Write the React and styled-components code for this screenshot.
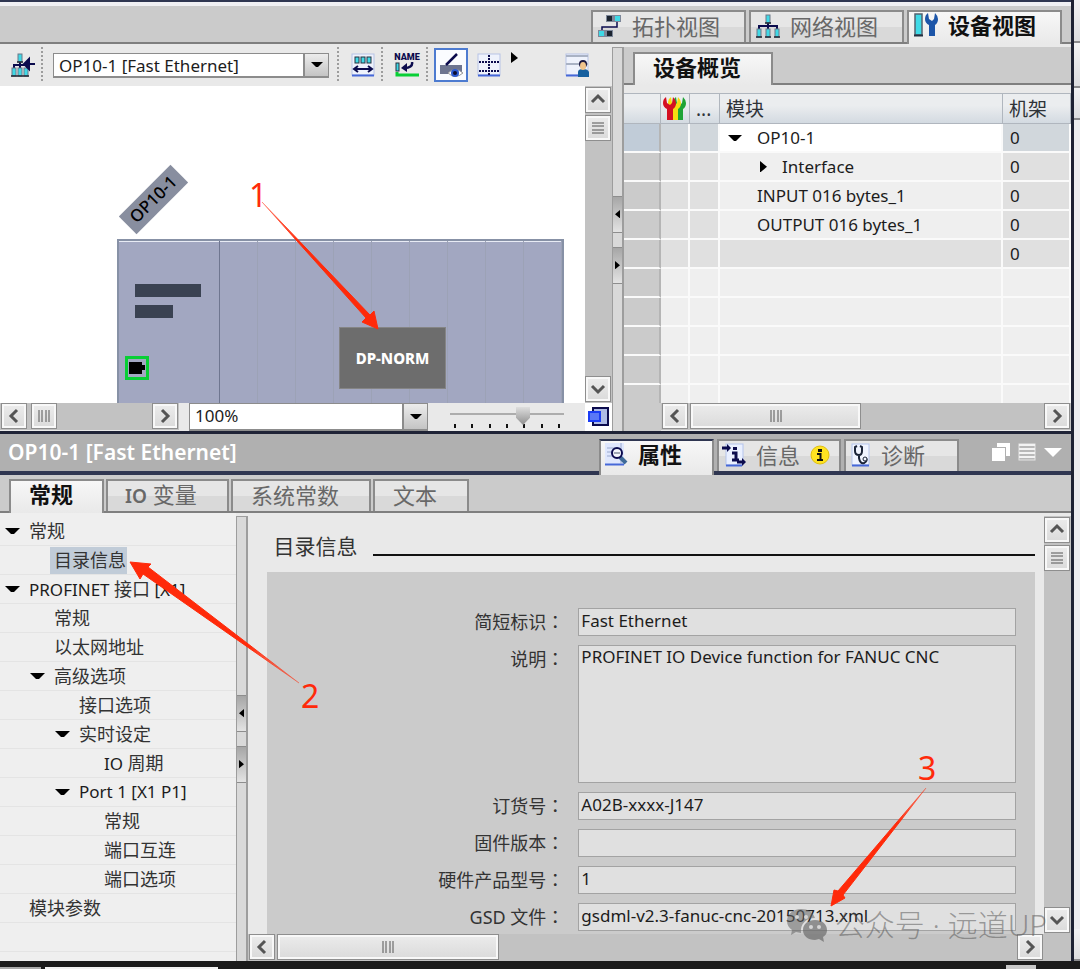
import React from "react";
import styled, { createGlobalStyle, css } from "styled-components";

const GlobalStyle = createGlobalStyle`
  * {
    box-sizing: border-box;
  }

  body {
    margin: 0;
    background: #e9e9e9;
    color: #1c1c1c;
    font-family: "Noto Sans", "Noto Sans CJK SC", sans-serif;
    font-size: 17px;
  }

  button, input, select, textarea {
    margin: 0;
    padding: 0;
    border: 0;
    border-radius: 0;
    background: none;
    color: inherit;
    font: inherit;
  }

  svg {
    display: block;
    flex: none;
  }
`;

const Page = styled.div`
  position: relative;
  display: flex;
  flex-direction: column;
  height: 100vh;
  min-height: 900px;
  overflow: hidden;
`;

const Frame = styled.div`
  display: flex;
  flex: 1;
  min-height: 0;
`;

const Main = styled.main`
  display: flex;
  flex: 1;
  flex-direction: column;
  min-width: 0;
  border-top: 2px solid #2f3651;
`;

const Edge = styled.aside`
  display: flex;
  flex-direction: column;
  width: 9px;
  border-left: 3px solid #1d2133;
  background: #ececef;
`;

const EdgeCell = styled.div`
  height: ${(p) => p.$height}px;
  border-bottom: 2px solid #8a8a8d;
  background: linear-gradient(#f2f2f4, #dcdcdf);
`;

const EdgeSpace = styled.div`
  flex: 1;
`;

const Taskbar = styled.footer`
  display: flex;
  align-items: flex-end;
  justify-content: space-between;
  height: 8px;
  background: #1b1b1b;
`;

const TaskItem = styled.div`
  width: ${(p) => p.$width}px;
  height: ${(p) => p.$height || 2}px;
  background: ${(p) => p.$color};
`;

const TaskGroup = styled.div`
  display: flex;
  gap: 4px;
  margin-right: ${(p) => p.$right || 0}px;
`;

/* tabs */

const ViewTabs = styled.nav`
  display: flex;
  align-items: flex-end;
  justify-content: flex-end;
  gap: 3px;
  height: 42px;
  padding-right: 9px;
  border-top: 4px solid #f0f0f3;
  border-bottom: 2px solid #7f7f7f;
  background: #cbcbcb;
`;

const Tab = styled.button`
  position: relative;
  display: flex;
  align-items: center;
  gap: 10px;
  flex: 0 1 ${(p) => p.$width}px;
  height: ${(p) => p.$height || 32}px;
  padding: 0 0 3px ${(p) => p.$pad || 5}px;
  border: 2px solid #8b8b8b;
  border-bottom: 0;
  background: linear-gradient(#e6e6e6 50%, #d9d9d9 50%);
  color: #686868;
  font-size: ${(p) => p.$size || 22}px;
  line-height: 26px;
  white-space: nowrap;

  ${(p) =>
    p.$active &&
    css`
      height: ${(p.$height || 32) + (p.$overlap || 2)}px;
      margin-bottom: -${p.$overlap || 2}px;
      padding-bottom: ${(p.$overlap || 2) + 4}px;
      border-top-color: ${p.$accent || "#8b8b8b"};
      background: linear-gradient(#f7f7f7, #e9e9e9);
      color: #111;
      font-weight: 600;
    `}
`;

const Latin = styled.span`
  font-size: 19px;
  font-weight: 600;
`;

/* editor */

const Editor = styled.section`
  display: grid;
  grid-template-columns: minmax(0, 612fr) 12px minmax(0, 447fr);
  background: #e9e9e9;
`;

const Pane = styled.div`
  display: flex;
  flex-direction: column;
  min-width: 0;
  min-height: 0;
`;

const Toolbar = styled.div`
  display: flex;
  align-items: center;
  height: 42px;
  padding: 0 18px 0 11px;
`;

const ToolButton = styled.button`
  display: flex;
  align-items: center;
  justify-content: center;
  width: 34px;
  height: 34px;
  margin-left: ${(p) => p.$left || 0}px;
  border: 2px solid ${(p) => (p.$pressed ? "#4d7bd0" : "transparent")};
  background: ${(p) => (p.$pressed ? "#fafcff" : "none")};
`;

const Divider = styled.div`
  width: 2px;
  height: 36px;
  margin-left: ${(p) => p.$left || 0}px;
  background: repeating-linear-gradient(#9d9d9d 0 2px, transparent 2px 4px);
`;

const Spacer = styled.div`
  flex: 1;
`;

const Combo = styled.label`
  display: flex;
  width: ${(p) => p.$width}px;
  height: ${(p) => p.$height}px;
  margin-left: ${(p) => p.$left}px;
  border: 1px solid #8c8c8c;
  border-bottom-width: 2px;
  background: #fff;
`;

const ComboSelect = styled.select`
  flex: 1;
  min-width: 0;
  padding: 0 0 2px 5px;
  appearance: none;
  outline: 0;
`;

const ComboArrow = styled.span`
  display: flex;
  align-items: center;
  justify-content: center;
  width: 25px;
  border-left: 2px solid #8c8c8c;
  background: linear-gradient(#ececec, #c4c4c4);
`;

const CanvasRow = styled.div`
  display: flex;
`;

const Canvas = styled.div`
  position: relative;
  flex: 1;
  height: 317px;
  overflow: hidden;
  background: #fff;
`;

const DeviceTag = styled.div`
  position: absolute;
  top: 101px;
  left: 117px;
  width: 73px;
  height: 25px;
  background: #888e9f;
  color: #000;
  font-weight: 500;
  line-height: 24px;
  text-align: center;
  transform: rotate(-45deg);
`;

const Device = styled.div`
  position: absolute;
  top: 153px;
  left: 117px;
  display: flex;
  width: 447px;
  height: 180px;
  border: 2px solid #8791a6;
  background: #a2a7c1;
  box-shadow: inset 0 1px #e8ebf5;
`;

const DeviceHead = styled.div`
  display: flex;
  flex-direction: column;
  align-items: flex-start;
  width: 101px;
  padding: 43px 0 0 16px;
  border-right: 1px solid #6f7690;
`;

const DeviceBar = styled.div`
  width: ${(p) => p.$width}px;
  height: 13px;
  margin-bottom: 8px;
  background: #3a4252;
`;

const Slot = styled.div`
  flex: 1;
  border-right: 1px solid #9ca2b6;
`;

const Port = styled.div`
  position: absolute;
  top: 115px;
  left: 6px;
  padding: 3px 0 0 1px;
  width: 24px;
  height: 24px;
  border: 3px solid #08cf35;
`;

const Norm = styled.div`
  position: absolute;
  top: 86px;
  left: 220px;
  width: 107px;
  height: 62px;
  border: 1px solid #858585;
  background: #6d6d6d;
  color: #fff;
  font-size: 15px;
  font-weight: 800;
  line-height: 60px;
  text-align: center;
`;

const BottomRow = styled.div`
  display: flex;
  height: 28px;
`;

/* scroll bars */

const VScroll = styled.div`
  display: flex;
  flex-direction: column;
  gap: 2px;
  width: 27px;
  padding: 1px 0;
  background: #c2c2c2;
`;

const HScroll = styled.div`
  display: flex;
  gap: ${(p) => p.$gap || 2}px;
  width: ${(p) => (p.$width ? `${p.$width}px` : "100%")};
  min-width: 0;
  flex: ${(p) => (p.$width ? "none" : "0 1 auto")};
  height: 27px;
  min-height: 27px;
  padding: 0 1px;
  background: #c2c2c2;
`;

const ScrollButton = styled.button`
  display: flex;
  align-items: center;
  justify-content: center;
  width: ${(p) => p.$width || "26px"};
  height: 26px;
  flex: none;
  border: 1px solid #8e8e8e;
  background: linear-gradient(#ececec, #dadada);
  box-shadow: inset 0 0 0 2px #f8f8f8;
`;

const Splitter = styled.div`
  display: flex;
  flex-direction: column;
  align-items: stretch;
  justify-content: center;
  gap: 14px;
  width: 12px;
  margin-top: 3px;
  border: solid #9d9d9d;
  border-width: 1px 2px 0 1px;
  background: #d9d9d9;
`;

const SplitButton = styled.button`
  display: flex;
  align-items: center;
  justify-content: center;
  height: 37px;
  border: solid #8d8d8d;
  border-width: 1px 0;
  background: linear-gradient(#a6a6a6, #e3e3e3);
`;

const Zoom = styled.div`
  display: flex;
  flex-direction: column;
  width: 114px;
  margin-left: 22px;
  padding-top: 1px;
`;

const Slider = styled.input`
  width: 100%;
  height: 20px;
  appearance: none;

  &::-webkit-slider-runnable-track {
    height: 2px;
    background: #adadad;
  }

  &::-webkit-slider-thumb {
    width: 14px;
    height: 18px;
    margin-top: -6px;
    appearance: none;
    border: 0;
    background: linear-gradient(#dedede, #8f8f8f);
    clip-path: polygon(0 0, 100% 0, 100% 60%, 50% 100%, 0 60%);
  }
`;

const Ticks = styled.div`
  display: flex;
  justify-content: space-between;
  padding: 0 4px;
`;

const Tick = styled.span`
  width: 2px;
  height: 4px;
  background: #111;
`;

const Overview = styled.button`
  display: flex;
  align-items: center;
  justify-content: center;
  width: 27px;
  background: #fff;
`;

/* overview table */

const SubTabs = styled.div`
  display: flex;
  align-items: flex-end;
  height: 38px;
  margin-top: 3px;
  padding-left: 9px;
  border-bottom: 2px solid #7f7f7f;
  background: #cbcbcb;
`;

const TableBox = styled.div`
  flex: 1 1 0;
  height: 0;
  margin-top: 8px;
  overflow: hidden;
`;

const Table = styled.table`
  width: 100%;
  border-spacing: 0;
  table-layout: fixed;
`;

const Th = styled.th`
  height: 31px;
  width: ${(p) => (p.$width ? `${p.$width}px` : "auto")};
  padding: 0 0 0 ${(p) => p.$pad ?? 6}px;
  border: solid #b0b6be;
  border-width: 1px 1px 1px 0;
  background: linear-gradient(#ebedef 40%, #d3dae1);
  color: #2f3338;
  font-size: 19px;
  font-weight: 400;
  line-height: 26px;
  text-align: left;
`;

const Td = styled.td`
  height: 29px;
  padding: 0 0 0 7px;
  border: solid #fafafa;
  border-width: 0 2px 2px 0;
  background: ${(p) => p.$bg};
  line-height: 24px;
  white-space: nowrap;

  &:first-child {
    border-right-color: #b5b5b5;
  }
`;

const CellText = styled.div`
  display: flex;
  align-items: center;
  gap: 15px;
  padding-left: ${(p) => p.$indent}px;
`;

const Gutter = styled.div`
  flex: none;
  width: 37px;
  background: #cbcbcb;
`;

/* inspector */

const Inspector = styled.section`
  display: flex;
  flex: 1;
  flex-direction: column;
  min-height: 0;
  border-top: 3px solid #1f2336;
`;

const TitleBar = styled.header`
  display: flex;
  align-items: flex-end;
  gap: 3px;
  height: 41px;
  padding-right: 9px;
  border-bottom: 4px solid #2f3651;
  background: #b0b0b0;
`;

const Title = styled.h1`
  flex: 1;
  margin: 0;
  padding-left: 8px;
  overflow: hidden;
  color: #fff;
  font-size: 21px;
  font-weight: 600;
  line-height: 38px;
  white-space: nowrap;
`;

const WindowButtons = styled.div`
  display: flex;
  align-items: center;
  gap: 8px;
  height: 38px;
  padding-left: 30px;
`;

const PageTabs = styled.nav`
  display: flex;
  align-items: flex-end;
  gap: 2px;
  height: 38px;
  padding-left: 9px;
  border-bottom: 2px solid #7f7f7f;
  background: #cbcbcb;
`;

const Body = styled.div`
  display: flex;
  flex: 1;
  min-height: 0;
  background: #e9e9e9;
`;

const Tree = styled.ul`
  width: 22%;
  margin: 0;
  padding: 4px 0 0;
  overflow: hidden;
  background: #efefef;
  list-style: none;
`;

const TreeItem = styled.li`
  display: flex;
  align-items: center;
  height: 29px;
  padding-left: ${(p) => 5 + p.$level * 25}px;
  border-bottom: 1px solid #e4e4e4;
  white-space: nowrap;
`;

const Twisty = styled.span`
  width: 20px;
  flex: none;
`;

const TreeLabel = styled.button`
  height: 27px;
  padding: 0 1px 0 4px;
  background: ${(p) => (p.$selected ? "#c1ccd8" : "none")};
  font-size: 17px;
  line-height: 26px;
`;

const Cjk = styled.span`
  color: #333;
  font-size: 18px;
`;

const Content = styled.div`
  display: flex;
  flex: 1;
  min-width: 0;
  padding-top: 3px;
`;

const FormColumn = styled.div`
  display: flex;
  flex: 1;
  flex-direction: column;
  min-width: 0;
`;

const FormScroll = styled.div`
  flex: 1;
  min-height: 0;
  padding: 0 9px 0 19px;
  overflow: hidden;
`;

const Heading = styled.h2`
  display: flex;
  gap: 15px;
  margin: 18px 0 14px;
  padding-left: 7px;
  color: #333;
  font-size: 21px;
  font-weight: 400;
  line-height: 24px;

  &::after {
    flex: 1;
    height: 2px;
    margin-top: 20px;
    background: #111;
    content: "";
  }
`;

const Form = styled.form`
  display: grid;
  grid-template-columns: minmax(0, 298fr) minmax(0, 438fr);
  gap: 9px 14px;
  padding: 36px 19px 20px 0;
  background: #cbcbcb;
`;

const Label = styled.label`
  color: #333;
  font-size: 18px;
  line-height: 26px;
  text-align: right;
  white-space: nowrap;
`;

const Colon = styled.span`
  font-family: "Noto Sans CJK TC", sans-serif;
`;

const field = css`
  width: 100%;
  border: 1px solid #a3a3a3;
  background: #e0e0e0;
  outline: 0;
`;

const Input = styled.input`
  ${field}
  height: 28px;
  padding: 0 2px 4px;
`;

const TextArea = styled.textarea`
  ${field}
  display: block;
  height: 138px;
  padding: 0 2px;
  line-height: 22px;
  resize: none;
`;

const Corner = styled.div`
  height: 25px;
`;

/* notes drawn over the windows */

const Arrows = styled.svg`
  position: absolute;
  top: 0;
  left: 0;
  pointer-events: none;
`;

const Note = styled.span`
  position: absolute;
  top: ${(p) => p.$y}px;
  left: ${(p) => p.$x}px;
  color: #ff2a0a;
  font-size: 32px;
  line-height: 36px;
`;

const Watermark = styled.div`
  position: absolute;
  right: 33px;
  bottom: 24px;
  display: flex;
  align-items: center;
  gap: 8px;
  color: rgba(90, 90, 90, 0.55);
  font-size: 30px;
  font-weight: 300;
  line-height: 40px;
  white-space: nowrap;
  pointer-events: none;
`;

const navy = "#0b0b4d";
const cyan = "#3fd9e6";

function Triangle({ dir = "down", size = 14, color = "#000" }) {
  const points = {
    down: "0,0 14,0 8,6 6,6",
    left: "6,0 6,10 0,5",
    right: "0,0 6,5 0,10",
  };
  const box = dir === "down" ? [14, 6] : [6, 10];
  return (
    <svg
      width={size}
      height={(size * box[1]) / box[0]}
      viewBox={`0 0 ${box[0]} ${box[1]}`}
    >
      <polygon points={points[dir]} fill={color} />
    </svg>
  );
}

function Chevron({ dir }) {
  const d = {
    up: "M2 10 L8 4 L14 10",
    down: "M2 5 L8 11 L14 5",
    left: "M11 2 L5 8 L11 14",
    right: "M5 2 L11 8 L5 14",
  };
  return (
    <svg width="16" height="16" viewBox="0 0 16 16">
      <path d={d[dir]} fill="none" stroke="#555" strokeWidth="3" />
    </svg>
  );
}

function Grip({ vertical }) {
  return (
    <svg width="12" height="12" viewBox="0 0 12 12">
      <path
        d={
          vertical
            ? "M0 1H12M0 4H12M0 8H12M0 11H12"
            : "M1 0V12M4 0V12M8 0V12M11 0V12"
        }
        stroke="#555"
      />
    </svg>
  );
}

function TopologyIcon() {
  return (
    <svg width="24" height="24" viewBox="0 0 24 24">
      <path d="M19 7V13H4V17" fill="none" stroke={navy} strokeWidth="1.5" />
      <rect x="8" y="1" width="15" height="7" fill="#7d8799" />
      <rect x="9" y="2" width="5" height="5" fill="#1b2430" />
      <rect x="17" y="2" width="5" height="5" fill={cyan} />
      <rect x="0" y="16" width="15" height="7" fill="#7d8799" />
      <rect x="1" y="17" width="5" height="5" fill={cyan} />
      <rect x="9" y="17" width="5" height="5" fill="#1b2430" />
    </svg>
  );
}

function NetworkIcon({ arrow }) {
  return (
    <svg width="24" height="24" viewBox="0 0 24 24">
      <path
        d={arrow ? "M9 8V12M3 16V12H16V16M9 12V16" : "M12 8V12M3 16V12H21V16M12 12V16"}
        fill="none"
        stroke={navy}
        strokeWidth="2"
      />
      {(arrow
        ? [[7, 1], [1, 15], [7, 15], [13, 15]]
        : [[10, 1], [1, 15], [10, 15], [19, 15]]
      ).map(([x, y]) => (
        <g key={`${x}-${y}`}>
          <rect x={x} y={y} width="4" height="8" fill={cyan} stroke="#6d7888" />
          <path d={`M${x - 1} ${y + 8}H${x + 5}`} stroke="#1d2733" strokeWidth="1.5" />
        </g>
      ))}
      {arrow && <path d="M24 11H17M18 6L13 11L18 16Z" fill={navy} stroke={navy} strokeWidth="2" />}
    </svg>
  );
}

function Wrench({ color, x = 0 }) {
  return (
    <path
      transform={`translate(${x} 0)`}
      d="M2 0L3 6L6 8L8 6L9 0Q12 3 12 6Q12 10 9 12V23H3V12Q-1 10 -1 6Q-1 2 2 0Z"
      fill={color}
    />
  );
}

function DeviceIcon() {
  return (
    <svg width="24" height="24" viewBox="0 0 24 24">
      <rect x="1" y="1" width="7" height="21" fill={cyan} stroke="#53616f" strokeWidth="1.5" />
      <path d="M0 22.5H9" stroke="#243040" strokeWidth="2" />
      <Wrench color="#1c55a8" x={12} />
    </svg>
  );
}

function WrenchesIcon() {
  return (
    <svg width="24" height="24" viewBox="0 0 24 24">
      <Wrench color="#1fa436" x={11} />
      <Wrench color="#f6dc11" x={6} />
      <Wrench color="#d40f22" x={1} />
    </svg>
  );
}

function Sheet({ children }) {
  return (
    <svg width="24" height="24" viewBox="0 0 24 24">
      <rect x="1" y="1" width="22" height="21" fill="#eef2fc" stroke="#b7c3e6" />
      <path d="M1 22.5H23" stroke="#4668d8" strokeWidth="2" />
      {children}
    </svg>
  );
}

function SpacingIcon() {
  return (
    <Sheet>
      {[4, 10, 16].map((x) => (
        <rect key={x} x={x} y="4" width="4" height="6" fill={cyan} stroke="#26303f" />
      ))}
      <path d="M4 16H20M7 13L3 16L7 19M17 13L21 16L17 19" fill="none" stroke={navy} strokeWidth="2" />
    </Sheet>
  );
}

const NameIconBox = styled.span`
  display: flex;
  flex-direction: column;
  align-items: center;
  color: #0b0b4d;
  font-family: Roboto, sans-serif;
  font-size: 9px;
  font-weight: 900;
  line-height: 9px;
`;

function NameIcon() {
  return (
    <NameIconBox>
      NAME
      <svg width="24" height="15" viewBox="0 0 24 15">
        <rect x="1" y="1" width="3" height="8" fill={cyan} stroke="#26303f" />
        <path d="M17 0C18 4 14 6 10 6" fill="none" stroke={navy} strokeWidth="2.5" />
        <path d="M12 1V10L6 6Z" fill={navy} />
        <path d="M2 10V13H24" fill="none" stroke="#08cf35" strokeWidth="3" />
      </svg>
    </NameIconBox>
  );
}

function LabelsIcon() {
  return (
    <svg width="26" height="26" viewBox="0 0 26 26">
      <rect x="2" y="13" width="22" height="9" fill="#6d7590" />
      <path d="M8 13L19 2" stroke={navy} strokeWidth="2.5" />
      <path d="M10 21Q17 14 25 21Q17 28 10 21Z" fill="#fff" stroke="#9b9b9b" />
      <circle cx="17" cy="21" r="4" fill="#2c5ad0" />
      <circle cx="17" cy="21" r="2" fill="#0b0b2d" />
    </svg>
  );
}

function GridIcon() {
  return (
    <Sheet>
      <path d="M2 9H22M2 18H22M12 2V22" stroke={navy} strokeWidth="2" strokeDasharray="2 1" />
    </Sheet>
  );
}

function LayoutIcon() {
  return (
    <Sheet>
      <path d="M1 3H23M1 11H23" stroke="#a9b2c4" strokeWidth="2" />
      <path d="M13 24V19Q13 16 18 16Q23 16 24 19V24Z" fill="#17609f" />
      <circle cx="18" cy="11" r="4" fill="#1b1840" />
      <ellipse cx="18" cy="13" rx="3" ry="4" fill="#f0c48c" />
    </Sheet>
  );
}

function OverviewIcon() {
  return (
    <svg width="22" height="22" viewBox="0 0 22 22">
      <rect x="5" y="2" width="15" height="17" fill="#aebbe4" stroke={navy} strokeWidth="2" />
      <rect x="1" y="6" width="11" height="9" fill="#5a78f6" stroke="#1b3df5" strokeWidth="2" />
    </svg>
  );
}

function PropertiesIcon() {
  return (
    <svg width="24" height="24" viewBox="0 0 24 24">
      <rect x="1" y="1" width="19" height="21" fill="#dfe7fd" />
      <path d="M1 22.5H20" stroke="#4668d8" strokeWidth="2" />
      <path d="M3 6H12M3 10H9M3 14H12M17 1V22" stroke="#9aa9cd" />
      <path d="M16 15L22 21" stroke="#3e6a98" strokeWidth="4" />
      <circle cx="13" cy="11" r="5" fill="#f4f6fb" stroke={navy} strokeWidth="2" />
      <path d="M10 11H16" stroke="#a1a9b5" strokeWidth="2" />
    </svg>
  );
}

function InfoIcon() {
  return (
    <svg width="24" height="24" viewBox="0 0 24 24">
      <rect x="4" y="1" width="17" height="21" fill="#eaf0ff" stroke="#b4c4ec" />
      <path d="M4 22.5H20" stroke="#4668d8" strokeWidth="2" />
      <path d="M0 5H5M15 19H20" stroke={navy} strokeWidth="3" />
      <path d="M5 1L9 5L5 9ZM20 15L24 19L20 23Z" fill={navy} />
      <path d="M10 10H14V17M10 17H17" fill="none" stroke={navy} strokeWidth="3" />
      <rect x="11" y="4" width="4" height="3" fill={navy} />
    </svg>
  );
}

function InfoBadge() {
  return (
    <svg width="20" height="20" viewBox="0 0 20 20">
      <circle cx="10" cy="10" r="9" fill="#ffe321" stroke="#dfbf12" />
      <rect x="8" y="4" width="4" height="3" fill="#111" />
      <path d="M7 9H10.500V15M7 15H13" fill="none" stroke="#111" strokeWidth="2" />
    </svg>
  );
}

function DiagnosticsIcon() {
  return (
    <svg width="20" height="24" viewBox="0 0 20 24">
      <rect x="1" y="1" width="17" height="21" fill="#f0f4ff" stroke="#b4c4ec" />
      <path d="M1 22.500H18" stroke="#4668d8" strokeWidth="2" />
      <path
        d="M6 3L4 4V8Q4 12 8 12Q11 12 11 8V4L9 3M8 12V15Q9 21 13 20Q17 18 15 15"
        fill="none"
        stroke="#1b2438"
        strokeWidth="2"
      />
      <circle cx="14" cy="16" r="2" fill="#f0f4ff" stroke="#1b2438" />
    </svg>
  );
}

function WindowIcons() {
  return (
    <>
      <svg width="18" height="18" viewBox="0 0 18 18" fill="#fff">
        <path d="M5 0H18V13H14V4H5Z" />
        <rect x="0" y="5" width="13" height="13" />
      </svg>
      <svg width="18" height="18" viewBox="0 0 18 18">
        <rect x="1" y="1" width="16" height="16" fill="#b8b8b8" stroke="#e4e4e4" />
        <path d="M1 2H17M1 6H17M1 10H17M1 14H17" stroke="#f3f3f3" strokeWidth="2" />
      </svg>
      <svg width="18" height="9" viewBox="0 0 18 9">
        <polygon points="0,0 18,0 9,9" fill="#fff" />
      </svg>
    </>
  );
}

function WeChatIcon() {
  return (
    <svg width="40" height="34" viewBox="0 0 40 34">
      <path
        d="M14 1C6 1 0 6 0 13C0 17 2 20 5 22L4 27L9 24L14 25C13 16 19 10 28 10C26 4 21 1 14 1Z"
        fill="rgba(100,100,100,.55)"
      />
      <path
        d="M28 12C21 12 16 16 16 22C16 28 21 32 28 32L32 31L37 34L36 29C39 27 40 25 40 22C40 16 35 12 28 12Z"
        fill="rgba(100,100,100,.65)"
      />
      <g fill="#d5d5d5">
        <circle cx="10" cy="9" r="2" />
        <circle cx="19" cy="9" r="2" />
        <circle cx="24" cy="19" r="2" />
        <circle cx="32" cy="19" r="2" />
      </g>
    </svg>
  );
}

const rows = [
  { name: "OP10-1", indent: 1, open: "down", rack: "0", selected: true },
  { name: "Interface", indent: 33, open: "right", rack: "0" },
  { name: "INPUT 016 bytes_1", indent: 30, rack: "0" },
  { name: "OUTPUT 016 bytes_1", indent: 30, rack: "0" },
  { name: "", indent: 0, rack: "0", dim: true },
  {},
  {},
  {},
  {},
  {},
];

const tree = [
  { level: 0, open: true, text: "常规" },
  { level: 1, text: "目录信息", selected: true },
  { level: 0, open: true, text: "PROFINET 接口 [X1]" },
  { level: 1, text: "常规" },
  { level: 1, text: "以太网地址" },
  { level: 1, open: true, text: "高级选项" },
  { level: 2, text: "接口选项" },
  { level: 2, open: true, text: "实时设定" },
  { level: 3, text: "IO 周期" },
  { level: 2, open: true, text: "Port 1 [X1 P1]" },
  { level: 3, text: "常规" },
  { level: 3, text: "端口互连" },
  { level: 3, text: "端口选项" },
  { level: 0, text: "模块参数" },
  { level: 0, text: "" },
];

const fields = [
  { id: "short", label: "简短标识", value: "Fast Ethernet" },
  {
    id: "description",
    label: "说明",
    value: "PROFINET IO Device function for FANUC CNC",
    area: true,
  },
  { id: "order", label: "订货号", value: "A02B-xxxx-J147" },
  { id: "firmware", label: "固件版本", value: "" },
  { id: "hardware", label: "硬件产品型号", value: "1" },
  { id: "gsd", label: "GSD 文件", value: "gsdml-v2.3-fanuc-cnc-20150713.xml" },
];

// tail and tip give the direction in which each arrow fades in
const arrows = [
  {
    tail: [262, 202],
    tip: [378, 329],
    points: "262,202 370,315 374,311 378,329 362,322 366,318",
  },
  {
    tail: [299, 683],
    tip: [130, 562],
    points: "299,683 148,567 151,564 130,562 140,579 143,574",
  },
  {
    tail: [926, 788],
    tip: [831, 906],
    points: "926,788 843,895 845,898 831,906 834,890 838,891",
  },
];

function cellColor(row) {
  if (row.selected) return "#d1d7dc";
  return row.rack ? "#e0e0e0" : "#efefef";
}

function nameColor(row) {
  if (row.selected) return "#fff";
  return row.dim ? "#e0e0e0" : "#efefef";
}

// Chinese parts are set one size larger than the Latin ones
function Mixed({ text }) {
  return text
    .split(/([\u4e00-\u9fff]+)/)
    .map((part, i) => (i % 2 ? <Cjk key={i}>{part}</Cjk> : part));
}

function SplitBar() {
  return (
    <Splitter>
      <SplitButton aria-label="Collapse left">
        <Triangle dir="left" size={5} />
      </SplitButton>
      <SplitButton aria-label="Collapse right">
        <Triangle dir="right" size={5} />
      </SplitButton>
    </Splitter>
  );
}

function VerticalScroll({ corner }) {
  return (
    <VScroll>
      <ScrollButton aria-label="Scroll up">
        <Chevron dir="up" />
      </ScrollButton>
      <ScrollButton aria-label="Scroll position">
        <Grip vertical />
      </ScrollButton>
      <Spacer />
      <ScrollButton aria-label="Scroll down">
        <Chevron dir="down" />
      </ScrollButton>
      {corner && <Corner />}
    </VScroll>
  );
}

function HorizontalScroll({ width, gap, thumb }) {
  return (
    <HScroll $width={width} $gap={gap}>
      <ScrollButton aria-label="Scroll left">
        <Chevron dir="left" />
      </ScrollButton>
      <ScrollButton aria-label="Scroll position" $width={thumb}>
        <Grip />
      </ScrollButton>
      <Spacer />
      <ScrollButton aria-label="Scroll right">
        <Chevron dir="right" />
      </ScrollButton>
    </HScroll>
  );
}

function DeviceView() {
  return (
    <Pane>
      <Toolbar>
        <NetworkIcon arrow />
        <Divider $left={6} />
        <Combo $width={276} $height={25} $left={10}>
          <ComboSelect aria-label="Device">
            <option>OP10-1 [Fast Ethernet]</option>
          </ComboSelect>
          <ComboArrow>
            <Triangle size={12} />
          </ComboArrow>
        </Combo>
        <Divider $left={8} />
        <ToolButton $left={7} aria-label="Spacing">
          <SpacingIcon />
        </ToolButton>
        <Divider $left={1} />
        <ToolButton $left={7} aria-label="Name">
          <NameIcon />
        </ToolButton>
        <Divider $left={2} />
        <ToolButton $left={6} $pressed aria-label="Show labels">
          <LabelsIcon />
        </ToolButton>
        <ToolButton $left={4} aria-label="Page breaks">
          <GridIcon />
        </ToolButton>
        <Spacer />
        <ToolButton aria-label="Save layout">
          <LayoutIcon />
        </ToolButton>
      </Toolbar>
      <CanvasRow>
        <Canvas>
          <DeviceTag>OP10-1</DeviceTag>
          <Device>
            <DeviceHead>
              <DeviceBar $width={66} />
              <DeviceBar $width={38} />
            </DeviceHead>
            {Array.from({ length: 9 }, (_, i) => (
              <Slot key={i} />
            ))}
            <Port>
              <svg width="17" height="12" viewBox="0 0 17 12">
                <path d="M0 0H13V3H16V8H13V12H0Z" />
              </svg>
            </Port>
            <Norm>DP-NORM</Norm>
          </Device>
        </Canvas>
        <VerticalScroll />
      </CanvasRow>
      <BottomRow>
        <HorizontalScroll width={179} gap={4} />
        <Combo $width={239} $height={28} $left={10}>
          <ComboSelect aria-label="Zoom">
            <option>100%</option>
          </ComboSelect>
          <ComboArrow>
            <Triangle size={12} />
          </ComboArrow>
        </Combo>
        <Zoom>
          <Slider type="range" min="0" max="100" defaultValue="66" aria-label="Zoom level" />
          <Ticks>
            {Array.from({ length: 7 }, (_, i) => (
              <Tick key={i} />
            ))}
          </Ticks>
        </Zoom>
        <Spacer />
        <Overview aria-label="Overview navigation">
          <OverviewIcon />
        </Overview>
      </BottomRow>
    </Pane>
  );
}

function DeviceOverview() {
  return (
    <Pane>
      <SubTabs>
        <Tab $width={140} $height={31} $pad={18} $active>
          设备概览
        </Tab>
      </SubTabs>
      <TableBox>
        <Table>
          <thead>
            <tr>
              <Th $width={37} />
              <Th $width={29} $pad={2}>
                <WrenchesIcon />
              </Th>
              <Th $width={30}>...</Th>
              <Th>模块</Th>
              <Th $width={68}>机架</Th>
            </tr>
          </thead>
          <tbody>
            {rows.map((row, i) => (
              <tr key={i}>
                <Td $bg={row.selected ? "#c1ccd8" : "#cbcbcb"} />
                <Td $bg={cellColor(row)} />
                <Td $bg={cellColor(row)} />
                <Td $bg={nameColor(row)}>
                  <CellText $indent={row.indent}>
                    {row.open && (
                      <Triangle dir={row.open} size={row.open === "down" ? 14 : 7} />
                    )}
                    {row.name}
                  </CellText>
                </Td>
                <Td $bg={cellColor(row)}>{row.rack}</Td>
              </tr>
            ))}
          </tbody>
        </Table>
      </TableBox>
      <BottomRow>
        <Gutter />
        <HorizontalScroll thumb="171px" />
      </BottomRow>
    </Pane>
  );
}

function Properties() {
  return (
    <Content>
      <FormColumn>
        <FormScroll>
          <Heading>目录信息</Heading>
          <Form>
            {fields.map((f) => (
              <React.Fragment key={f.id}>
                <Label htmlFor={f.id}>
                  {f.label}
                  <Colon>：</Colon>
                </Label>
                {f.area ? (
                  <TextArea id={f.id} defaultValue={f.value} readOnly />
                ) : (
                  <Input id={f.id} defaultValue={f.value} readOnly />
                )}
              </React.Fragment>
            ))}
          </Form>
        </FormScroll>
        <HorizontalScroll thumb="28%" />
      </FormColumn>
      <VerticalScroll corner />
    </Content>
  );
}

function App() {
  return (
    <Page>
      <GlobalStyle />
      <Frame>
        <Main>
          <ViewTabs>
            <Tab $width={155}>
              <TopologyIcon />
              拓扑视图
            </Tab>
            <Tab $width={155}>
              <NetworkIcon />
              网络视图
            </Tab>
            <Tab $width={155} $active>
              <DeviceIcon />
              设备视图
            </Tab>
          </ViewTabs>
          <Editor>
            <DeviceView />
            <SplitBar />
            <DeviceOverview />
          </Editor>
          <Inspector>
            <TitleBar>
              <Title>OP10-1 [Fast Ethernet]</Title>
              <Tab $width={115} $pad={3} $active $overlap={4} $accent="#2f3651">
                <PropertiesIcon />
                属性
              </Tab>
              <Tab $width={124} $pad={3}>
                <InfoIcon />
                信息
                <InfoBadge />
              </Tab>
              <Tab $width={115}>
                <DiagnosticsIcon />
                诊断
              </Tab>
              <WindowButtons>
                <WindowIcons />
              </WindowButtons>
            </TitleBar>
            <PageTabs>
              <Tab $width={95} $pad={18} $active>
                常规
              </Tab>
              <Tab $width={123} $pad={17}>
                <span>
                  <Latin>IO</Latin> 变量
                </span>
              </Tab>
              <Tab $width={140} $pad={18}>
                系统常数
              </Tab>
              <Tab $width={96} $pad={18}>
                文本
              </Tab>
            </PageTabs>
            <Body>
              <Tree>
                {tree.map((node, i) => (
                  <TreeItem key={i} $level={node.level}>
                    <Twisty>{node.open && <Triangle size={15} />}</Twisty>
                    {node.text && (
                      <TreeLabel $selected={node.selected}>
                        <Mixed text={node.text} />
                      </TreeLabel>
                    )}
                  </TreeItem>
                ))}
              </Tree>
              <SplitBar />
              <Properties />
            </Body>
          </Inspector>
        </Main>
        <Edge>
          <EdgeCell $height={43} />
          <EdgeCell $height={45} />
          <EdgeCell $height={32} />
          <EdgeSpace />
          <EdgeCell $height={32} />
        </Edge>
      </Frame>
      <Taskbar>
        <TaskGroup>
          <TaskItem $width={41} $color="#a9a9a9" />
          <TaskItem $width={173} $color="#f2f2f2" />
        </TaskGroup>
        <TaskGroup $right={44}>
          <TaskItem $width={30} $height={4} $color="#c9c9c9" />
        </TaskGroup>
      </Taskbar>
      <Arrows width="1080" height="969" viewBox="0 0 1080 969">
        {arrows.map(({ tail, tip, points }, i) => (
          <g key={i}>
            <linearGradient
              id={`fade${i}`}
              gradientUnits="userSpaceOnUse"
              x1={tail[0]}
              y1={tail[1]}
              x2={tip[0]}
              y2={tip[1]}
            >
              <stop offset="0" stopColor="#ff2a0a" stopOpacity="0.3" />
              <stop offset="0.3" stopColor="#ff2a0a" />
            </linearGradient>
            <polygon
              points={points}
              fill={`url(#fade${i})`}
              stroke={`url(#fade${i})`}
              strokeWidth="1"
            />
          </g>
        ))}
        <polygon points="511,52 518,58 511,63" />
      </Arrows>
      <Note $x={249} $y={177}>
        1
      </Note>
      <Note $x={301} $y={678}>
        2
      </Note>
      <Note $x={918} $y={750}>
        3
      </Note>
      <Watermark>
        <WeChatIcon />
        公众号 · 远道UP
      </Watermark>
    </Page>
  );
}

export default App;
